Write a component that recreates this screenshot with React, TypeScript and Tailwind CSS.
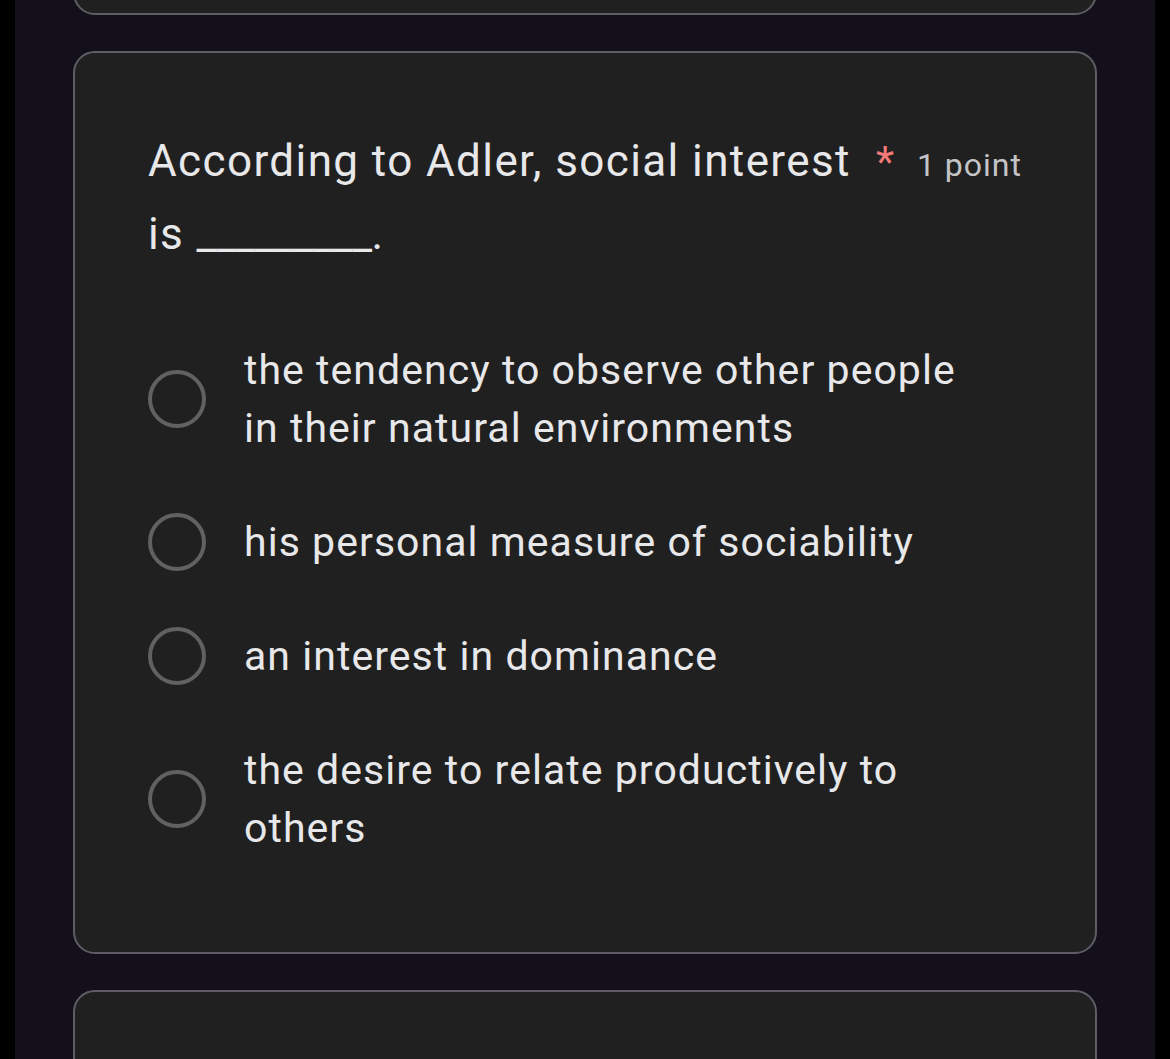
import React from "react";

const options = [
  "the tendency to observe other people in their natural environments",
  "his personal measure of sociability",
  "an interest in dominance",
  "the desire to relate productively to others",
];

export default function App() {
  return (
    <div
      className="w-[1170px] h-[1059px] bg-black flex overflow-hidden"
      style={{ fontFamily: "Roboto, 'Noto Sans', Arial, sans-serif" }}
    >
      <div className="ml-[15px] w-[1140px] h-full bg-[#13101c] px-[58px] flex flex-col gap-[36px] overflow-hidden">
        <div className="-mt-[46px] h-[61px] shrink-0 rounded-[22px] border-2 border-[#5e5d63] bg-[#202020]" />

        <div className="shrink-0 rounded-[22px] border-2 border-[#5e5d63] bg-[#202020] pl-[73px] pr-[73px] pt-[72px] pb-[95px]">
          <div className="flex items-baseline justify-between">
            <div className="w-[762px] text-[44px] leading-[72px] text-[#e8e8ea] tracking-[1.4px]">
              According to Adler, social interest
              <span className="text-[#f47a78] text-[42px] ml-[25px] tracking-normal">*</span>{" "}
              is <span className="tracking-[-0.4px]">_________</span>.
            </div>
            <div className="shrink-0 text-[32px] text-[#c4c4c7] tracking-[1px]">1 point</div>
          </div>

          <div className="mt-[71px] flex flex-col gap-[56px]">
            {options.map((o) => (
              <div key={o} className="flex items-center">
                <div className="w-[58px] h-[58px] shrink-0 rounded-full border-[4px] border-[#616164]" />
                <div className="ml-[38px] flex-1 pr-[40px] text-[41px] leading-[58px] text-[#e8e8ea] tracking-[1.05px]">
                  {o}
                </div>
              </div>
            ))}
          </div>
        </div>

        <div className="h-[200px] shrink-0 rounded-[22px] border-2 border-[#5e5d63] bg-[#202020]" />
      </div>
    </div>
  );
}
